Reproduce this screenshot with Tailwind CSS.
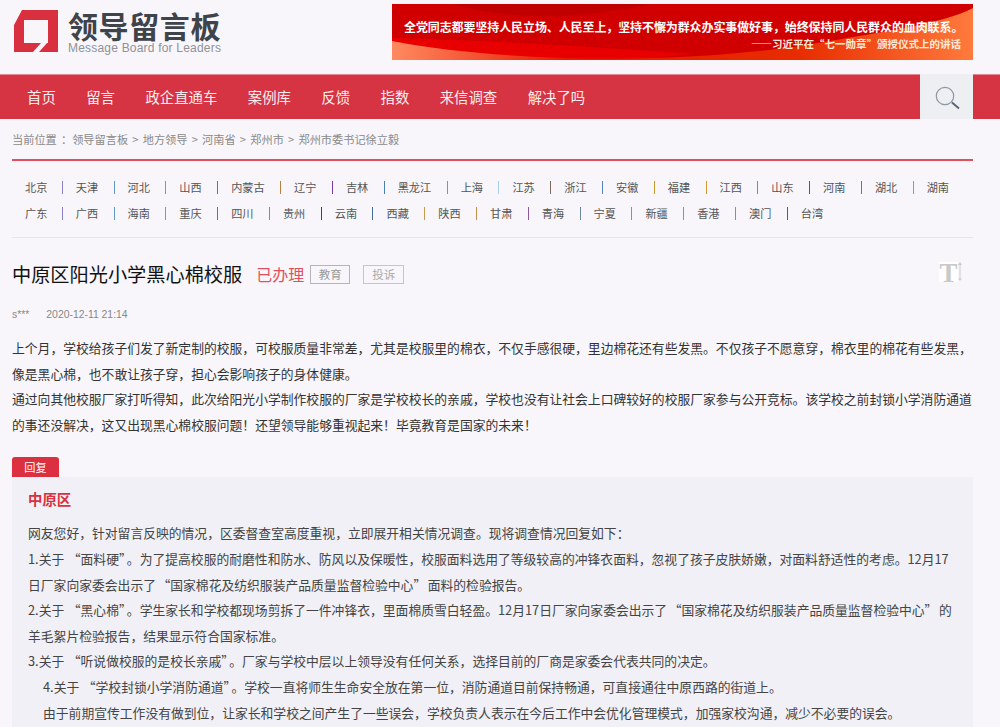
<!DOCTYPE html>
<html lang="zh-CN">

<head>
    <meta charset="UTF-8">
    <title>中原区阳光小学黑心棉校服</title>
    <script src="https://cdn.jsdelivr.net/npm/@tailwindcss/browser@4"></script>
</head>

<body class="bg-[#f8f6fa] font-['Noto_Sans_CJK_SC','Liberation_Sans',sans-serif] text-[#333] overflow-hidden h-[727px]">
    <!-- logo + banner -->
    <header class="h-[74px] flex justify-between pl-[14px] pr-[27px]">
        <div class="flex pt-[10px]">
            <svg class="w-[45px] h-[44px]" viewBox="0 0 45 44">
                <path fill="#d9303f" d="M8 0H44V42H25L33 33H34V10H10V33H27L19 42H0V15Z"></path>
            </svg>
            <div class="ml-[9px]">
                <div class="text-[30px] leading-[31px] font-bold text-[#3f444b] tracking-[0.6px]">领导留言板</div>
                <div class="font-['Liberation_Sans'] text-[12px] leading-[14px] text-[#8f9297] tracking-[0.2px]">Message Board for Leaders</div>
            </div>
        </div>
        <div class="relative w-[581px] h-[56px] mt-[4px] bg-[#d10000] overflow-hidden">
            <svg class="absolute inset-0 w-full h-full" viewBox="0 0 581 56" preserveAspectRatio="none">
                <defs>
                    <linearGradient id="swoosh" x1="0" x2="1" y1="0" y2="0">
                        <stop offset="0" stop-color="#ff8a60"></stop>
                        <stop offset="0.3" stop-color="#e61a00"></stop>
                        <stop offset="0.7" stop-color="#e82c00"></stop>
                        <stop offset="1" stop-color="#ff7a3c"></stop>
                    </linearGradient>
                </defs>
                <path fill="#c00000" d="M60 0H260C200 12 130 20 60 0Z"></path>
                <path fill="#e80000" d="M0 34C90 36 190 42 300 50L240 56H0Z"></path>
                <path fill="url(#swoosh)" d="M0 37C120 60 300 60 420 40C490 28 550 20 581 4V56H0Z"></path>
            </svg>
            <div class="relative pl-[12px] pt-[15px] text-[12px] leading-[16px] font-bold text-white whitespace-nowrap tracking-[-0.1px]">全党同志都要坚持人民立场、人民至上，坚持不懈为群众办实事做好事，始终保持同人民群众的血肉联系。</div>
            <div class="relative pr-[12px] pt-[2px] text-right text-[10.5px] leading-[14px] font-bold text-[#ffe9d8] whitespace-nowrap">——习近平在“七一勋章”颁授仪式上的讲话</div>
        </div>
    </header>

    <!-- nav -->
    <nav class="h-[45px] bg-[#d63343] border-t border-[#e58a95] flex justify-between pl-[27px] pr-[27px]">
        <div class="flex items-center gap-[30.400px] text-[14.400px] text-[#fdeef0]">
            <a>首页</a>
            <a>留言</a>
            <a>政企直通车</a>
            <a>案例库</a>
            <a>反馈</a>
            <a>指数</a>
            <a>来信调查</a>
            <a>解决了吗</a>
        </div>
        <div class="w-[53px] h-[45px] -mt-px bg-[#eeeff2] flex items-center justify-center">
            <svg class="w-[26px] h-[26px]" viewBox="0 0 26 26" fill="none">
                <circle cx="11" cy="12" r="8.700" stroke="#8d96a3" stroke-width="1.2"></circle>
                <path d="M18 18.500L25 24.500" stroke="#5a6675" stroke-width="2"></path>
            </svg>
        </div>
    </nav>

    <main class="pl-[12px] pr-[27px]">
        <div class="h-[42px] border-b-2 border-[#e0505e] pt-[12px] text-[11.200px] leading-[16px] text-[#8a8a8a] [word-spacing:1.700px]">当前位置 ：领导留言板 &gt; 地方领导 &gt; 河南省 &gt; 郑州市 &gt; 郑州市委书记徐立毅</div>

        <!-- provinces -->
        <div class="pt-[13px] h-[77px] border-b border-[#e6e6e8] text-[11.200px] text-[#555]">
            <div class="flex items-center h-[26px]">
                <a class="pl-[13px] pr-[14.400px] leading-[13px]">北京</a>
                <a class="pl-[13px] pr-[15.400px] border-l border-[#8f7fc0] leading-[13px]">天津</a>
                <a class="pl-[13px] pr-[15.400px] border-l border-[#5f9cc5] leading-[13px]">河北</a>
                <a class="pl-[13px] pr-[15.400px] border-l border-[#9a9a50] leading-[13px]">山西</a>
                <a class="pl-[13px] pr-[15.400px] border-l border-[#8c6d46] leading-[13px]">内蒙古</a>
                <a class="pl-[13px] pr-[15.400px] border-l border-[#b98040] leading-[13px]">辽宁</a>
                <a class="pl-[13px] pr-[15.400px] border-l border-[#7a3c9e] leading-[13px]">吉林</a>
                <a class="pl-[13px] pr-[15.400px] border-l border-[#4a80b0] leading-[13px]">黑龙江</a>
                <a class="pl-[13px] pr-[15.400px] border-l border-[#8a9a70] leading-[13px]">上海</a>
                <a class="pl-[13px] pr-[15.400px] border-l border-[#a8d0ee] leading-[13px]">江苏</a>
                <a class="pl-[13px] pr-[15.400px] border-l border-[#7a6a5a] leading-[13px]">浙江</a>
                <a class="pl-[13px] pr-[15.400px] border-l border-[#4f86b5] leading-[13px]">安徽</a>
                <a class="pl-[13px] pr-[15.400px] border-l border-[#c49a30] leading-[13px]">福建</a>
                <a class="pl-[13px] pr-[15.400px] border-l border-[#d09830] leading-[13px]">江西</a>
                <a class="pl-[13px] pr-[15.400px] border-l border-[#c87a28] leading-[13px]">山东</a>
                <a class="pl-[13px] pr-[15.400px] border-l border-[#7f3a9a] leading-[13px]">河南</a>
                <a class="pl-[13px] pr-[15.400px] border-l border-[#4880b0] leading-[13px]">湖北</a>
                <a class="pl-[13px] pr-[15.400px] border-l border-[#8aa090] leading-[13px]">湖南</a>
            </div>
            <div class="flex items-center h-[26px]">
                <a class="pl-[13px] pr-[14.400px] leading-[13px]">广东</a>
                <a class="pl-[13px] pr-[15.400px] border-l border-[#8f7fc0] leading-[13px]">广西</a>
                <a class="pl-[13px] pr-[15.400px] border-l border-[#5f9cc5] leading-[13px]">海南</a>
                <a class="pl-[13px] pr-[15.400px] border-l border-[#9a9a50] leading-[13px]">重庆</a>
                <a class="pl-[13px] pr-[15.400px] border-l border-[#8c6d46] leading-[13px]">四川</a>
                <a class="pl-[13px] pr-[15.400px] border-l border-[#b98040] leading-[13px]">贵州</a>
                <a class="pl-[13px] pr-[15.400px] border-l border-[#2f4a70] leading-[13px]">云南</a>
                <a class="pl-[13px] pr-[15.400px] border-l border-[#3f6f9a] leading-[13px]">西藏</a>
                <a class="pl-[13px] pr-[15.400px] border-l border-[#c49a50] leading-[13px]">陕西</a>
                <a class="pl-[13px] pr-[15.400px] border-l border-[#c09050] leading-[13px]">甘肃</a>
                <a class="pl-[13px] pr-[15.400px] border-l border-[#8a5a9a] leading-[13px]">青海</a>
                <a class="pl-[13px] pr-[15.400px] border-l border-[#6a8a9a] leading-[13px]">宁夏</a>
                <a class="pl-[13px] pr-[15.400px] border-l border-[#8a9a60] leading-[13px]">新疆</a>
                <a class="pl-[13px] pr-[15.400px] border-l border-[#a09a50] leading-[13px]">香港</a>
                <a class="pl-[13px] pr-[15.400px] border-l border-[#b08850] leading-[13px]">澳门</a>
                <a class="pl-[13px] pr-[15.400px] border-l border-[#6a4aa0] leading-[13px]">台湾</a>
            </div>
        </div>

        <!-- title -->
        <div class="relative flex items-center h-[36px] mt-[18px]">
            <h1 class="text-[19.200px] text-[#111]">中原区阳光小学黑心棉校服</h1>
            <span class="ml-[14px] text-[16px] text-[#e0505e]">已办理</span>
            <span class="ml-[6px] w-[40px] h-[19px] border border-[#b5b5b5] text-[11.500px] leading-[17px] text-center text-[#999]">教育</span>
            <span class="ml-[13px] w-[41px] h-[19px] border border-[#c5c5c5] text-[11.500px] leading-[17px] text-center text-[#aaa]">投诉</span>
            <div class="absolute right-[11px] top-[6px] flex">
                <span class="w-[19px] h-[20px] bg-white font-['Liberation_Serif'] font-bold text-[27px] leading-[22px] text-center text-[#c9c9c9]">T</span>
                <svg class="w-[4px] h-[19px]" viewBox="0 0 4 19"><path d="M2 0L4 3H0ZM2 19L4 16H0ZM1.500 2H2.500V17H1.500Z" fill="#c9c9c9"></path></svg>
            </div>
        </div>
        <div class="mt-[15px] flex font-['Liberation_Sans'] text-[10.400px] leading-[16px] text-[#888]">
            <span>s***</span>
            <span class="ml-[17px]">2020-12-11 21:14</span>
        </div>

        <!-- message -->
        <div class="mt-[12px] text-[12.800px] leading-[25.600px] text-[#333]">
            <p>上个月，学校给孩子们发了新定制的校服，可校服质量非常差，尤其是校服里的棉衣，不仅手感很硬，里边棉花还有些发黑。不仅孩子不愿意穿，棉衣里的棉花有些发黑，像是黑心棉，也不敢让孩子穿，担心会影响孩子的身体健康。</p>
            <p>通过向其他校服厂家打听得知，此次给阳光小学制作校服的厂家是学校校长的亲戚，学校也没有让社会上口碑较好的校服厂家参与公开竞标。该学校之前封锁小学消防通道的事还没解决，这又出现黑心棉校服问题！还望领导能够重视起来！毕竟教育是国家的未来！</p>
        </div>

        <!-- reply -->
        <div class="mt-[20px] w-[47px] h-[20px] bg-[#dc3040] rounded-t-[3px] text-white text-[11.200px] leading-[20px] text-center">回复</div>
        <div class="bg-[#f0f0f6] px-[16px] pt-[12px] pb-[10px]">
            <h2 class="text-[14.400px] leading-[20px] font-bold text-[#d9303f]">中原区</h2>
            <div class="mt-[11px] text-[12.800px] leading-[25.600px] text-[#444]">
                <p>网友您好，针对留言反映的情况，区委督查室高度重视，立即展开相关情况调查。现将调查情况回复如下：</p>
                <p>1.关于<span class="pl-[3.500px]">“</span>面料硬<span class="pr-[1.500px]">”</span>。为了提高校服的耐磨性和防水、防风以及保暖性，校服面料选用了等级较高的冲锋衣面料，忽视了孩子皮肤娇嫩，对面料舒适性的考虑。12月17日厂家向家委会出示了<span class="pl-[1.500px]">“</span>国家棉花及纺织服装产品质量监督检验中心<span class="pr-[1.500px]">”</span>面料的检验报告。</p>
                <p>2.关于<span class="pl-[3.500px]">“</span>黑心棉<span class="pr-[1.500px]">”</span>。学生家长和学校都现场剪拆了一件冲锋衣，里面棉质雪白轻盈。12月17日厂家向家委会出示了<span class="pl-[1.500px]">“</span>国家棉花及纺织服装产品质量监督检验中心<span class="pr-[1.500px]">”</span>的羊毛絮片检验报告，结果显示符合国家标准。</p>
                <p>3.关于<span class="pl-[3.500px]">“</span>听说做校服的是校长亲戚<span class="pr-[1.500px]">”</span>。厂家与学校中层以上领导没有任何关系，选择目前的厂商是家委会代表共同的决定。</p>
                <p class="pl-[15px]">4.关于<span class="pl-[3.500px]">“</span>学校封锁小学消防通道<span class="pr-[1.500px]">”</span>。学校一直将师生生命安全放在第一位，消防通道目前保持畅通，可直接通往中原西路的街道上。</p>
                <p class="pl-[15px]">由于前期宣传工作没有做到位，让家长和学校之间产生了一些误会，学校负责人表示在今后工作中会优化管理模式，加强家校沟通，减少不必要的误会。</p>
            </div>
        </div>
    </main>
</body>

</html>
